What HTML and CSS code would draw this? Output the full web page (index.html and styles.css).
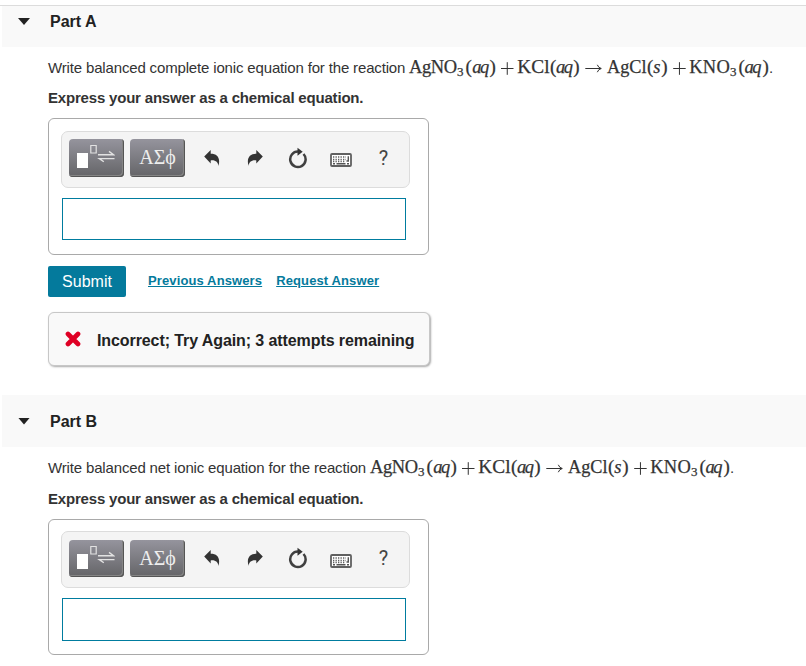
FILE: index.html
```html
<!DOCTYPE html>
<html lang="en">
<head>
<meta charset="utf-8">
<title>Ionic equations</title>
<link rel="stylesheet" href="styles.css">
</head>
<body>
<svg class="defs" aria-hidden="true">
  <symbol id="template" viewBox="0 0 40 24">
    <path d="M2 9h11v15H2z" fill="#fff"/>
    <path d="M15.8 1.5h5.4v7.5h-5.4z" fill="none" stroke="#e2e2e2" stroke-width="1.2"/>
    <path d="M23 10.7h15.5L34 7.4M39.5 14.6H24.3l4.5 3.2" fill="none" stroke="#e2e2e2" stroke-width="1.4"/>
  </symbol>
  <symbol id="undo" viewBox="0 0 16 18"><path d="M.2 7.4 6.7 1v3.8c6.7 0 9.9 4.2 7.8 12.2-.3-3.7-3-6.2-7.8-5.6v3z"/></symbol>
  <symbol id="reset" viewBox="0 0 20 22"><path d="M10 4.6A7.7 7.7 0 1 0 15.5 7" fill="none" stroke="#404040" stroke-width="2.5"/><path d="m9.5.8 5.2 4-5.2 4z"/></symbol>
  <symbol id="keyboard" viewBox="0 0 22 14">
    <rect x="1" y="1" width="20" height="12" rx="1" fill="#fff" stroke="#606060" stroke-width="1.8"/>
    <path d="M3 4h13M3 6.5h13M3 8.5h12" fill="none" stroke="#606060" stroke-width="1.3" stroke-dasharray="1.3 1.2"/>
    <path d="M3 10.8h2m1.5 0h9m1.5 0h2M18.3 3.2v4.8h-1.8" fill="none" stroke="#555" stroke-width="1.4"/>
  </symbol>
  <symbol id="cross" viewBox="0 0 16 16"><path d="m3 3 10 10M13 3 3 13" stroke="#df0024" stroke-width="4.7" stroke-linecap="round"/></symbol>
</svg>

<section class="part part-a">
  <header class="part-head"><span class="caret"></span><h2>Part A</h2></header>
  <div class="body">
    <p class="prompt"><span class="lead">Write balanced complete ionic equation for the reaction</span>
      <svg class="equation math" viewBox="0 0 364 24">
        <text x="0" y="17" textLength="48">AgNO</text><text x="48" y="20" class="sub">3</text>
        <text x="56.5" y="17" class="paren">(</text><text x="63.3" y="17" textLength="17" class="it">aq</text><text x="80.5" y="17" class="paren">)</text>
        <path d="M92 12.5h12.5M98.25 6.2v12.6"/>
        <text x="108.3" y="17" textLength="32.2" lengthAdjust="spacingAndGlyphs">KCl</text>
        <text x="141" y="17" class="paren">(</text><text x="147" y="17" textLength="17" class="it">aq</text><text x="164.3" y="17" class="paren">)</text>
        <path d="M176.3 12.5h15.5M188.3 8.8q1 3 4 3.7q-3 .7-4 3.7"/>
        <text x="198" y="17" textLength="39.5" lengthAdjust="spacingAndGlyphs">AgCl</text>
        <text x="238" y="17" class="paren">(</text><text x="244.3" y="17" class="it">s</text><text x="252.2" y="17" class="paren">)</text>
        <path d="M264.2 12.5h12.5M270.45 6.2v12.6"/>
        <text x="280.3" y="17" textLength="40.5">KNO</text><text x="321" y="20" class="sub">3</text>
        <text x="329.5" y="17" class="paren">(</text><text x="335.5" y="17" textLength="17" class="it">aq</text><text x="353.5" y="17" class="paren">)</text>
        <text x="360" y="17" class="dot">.</text>
      </svg></p>
    <p class="hint">Express your answer as a chemical equation.</p>
    <div class="editor">
      <div class="toolbar">
        <span class="tool-btn"><svg width="40" height="24"><use href="#template"/></svg></span>
        <span class="tool-btn greek">ΑΣϕ</span>
        <span class="tool"><svg width="16" height="18"><use href="#undo"/></svg></span>
        <span class="tool"><svg class="flip" width="16" height="18"><use href="#undo"/></svg></span>
        <span class="tool"><svg width="20" height="22"><use href="#reset"/></svg></span>
        <span class="tool keys"><svg width="22" height="14"><use href="#keyboard"/></svg></span>
        <span class="tool help">?</span>
      </div>
      <div class="answer"></div>
    </div>
    <div class="actions"><span class="submit">Submit</span><a class="prev">Previous Answers</a><a class="request">Request Answer</a></div>
    <div class="feedback"><svg width="16" height="16"><use href="#cross"/></svg><span>Incorrect; Try Again; 3 attempts remaining</span></div>
  </div>
</section>

<section class="part part-b">
  <header class="part-head"><span class="caret"></span><h2>Part B</h2></header>
  <div class="body">
    <p class="prompt"><span class="lead">Write balanced net ionic equation for the reaction</span>
      <svg class="equation math" viewBox="0 0 364 24">
        <text x="0" y="17" textLength="48">AgNO</text><text x="48" y="20" class="sub">3</text>
        <text x="56.5" y="17" class="paren">(</text><text x="63.3" y="17" textLength="17" class="it">aq</text><text x="80.5" y="17" class="paren">)</text>
        <path d="M92 12.5h12.5M98.25 6.2v12.6"/>
        <text x="108.3" y="17" textLength="32.2" lengthAdjust="spacingAndGlyphs">KCl</text>
        <text x="141" y="17" class="paren">(</text><text x="147" y="17" textLength="17" class="it">aq</text><text x="164.3" y="17" class="paren">)</text>
        <path d="M176.3 12.5h15.5M188.3 8.8q1 3 4 3.7q-3 .7-4 3.7"/>
        <text x="198" y="17" textLength="39.5" lengthAdjust="spacingAndGlyphs">AgCl</text>
        <text x="238" y="17" class="paren">(</text><text x="244.3" y="17" class="it">s</text><text x="252.2" y="17" class="paren">)</text>
        <path d="M264.2 12.5h12.5M270.45 6.2v12.6"/>
        <text x="280.3" y="17" textLength="40.5">KNO</text><text x="321" y="20" class="sub">3</text>
        <text x="329.5" y="17" class="paren">(</text><text x="335.5" y="17" textLength="17" class="it">aq</text><text x="353.5" y="17" class="paren">)</text>
        <text x="360" y="17" class="dot">.</text>
      </svg></p>
    <p class="hint">Express your answer as a chemical equation.</p>
    <div class="editor">
      <div class="toolbar">
        <span class="tool-btn"><svg width="40" height="24"><use href="#template"/></svg></span>
        <span class="tool-btn greek">ΑΣϕ</span>
        <span class="tool"><svg width="16" height="18"><use href="#undo"/></svg></span>
        <span class="tool"><svg class="flip" width="16" height="18"><use href="#undo"/></svg></span>
        <span class="tool"><svg width="20" height="22"><use href="#reset"/></svg></span>
        <span class="tool keys"><svg width="22" height="14"><use href="#keyboard"/></svg></span>
        <span class="tool help">?</span>
      </div>
      <div class="answer"></div>
    </div>
  </div>
</section>
</body>
</html>
```
FILE: styles.css
```css
* { box-sizing: border-box; }
body {
  margin: 0;
  padding-top: 5px;
  height: 666px;
  overflow: hidden;
  background: #fff;
  color: #333;
  font-family: "Liberation Sans", Arial, sans-serif;
}
h2, p { margin: 0; }
svg { display: block; flex: none; }
.defs { position: absolute; width: 0; height: 0; }

.part-a { height: 390px; border-top: 1px solid #dcdcdc; }
.part-head {
  display: flex;
  align-items: center;
  height: 52px;
  margin-left: 2px;
  padding-left: 16px;
  background: #f9f9f9;
}
.part-a .part-head { height: 41px; padding-bottom: 10px; }
.caret {
  width: 12px;
  height: 7px;
  margin-right: 20px;
  background: #222;
  clip-path: polygon(0 0, 100% 0, 50% 100%);
}
.part-head h2 { font-size: 16px; line-height: 20px; color: #222; }
.part-b h2 { padding-top: 1px; }
.body { padding-left: 48px; }

.prompt { display: flex; height: 24px; margin-top: 9px; font-size: 15px; line-height: 24px; white-space: nowrap; }
.lead { flex: none; width: 361px; letter-spacing: -0.155px; }
.part-b .lead { width: 322px; }
.equation { width: 364px; height: 24px; overflow: visible; }
.math { font-family: "Liberation Serif", serif; font-size: 18.5px; fill: #333; }
.math text { stroke: #333; stroke-width: 0.25; }
.math path { fill: none; stroke: #333; stroke-width: 1; }
.math .sub { font-size: 13px; }
.math .it { font-style: italic; }
.math .paren { font-size: 19px; }
.math .dot { font-family: "Liberation Sans", sans-serif; font-size: 15px; stroke: none; }

.hint { margin-top: 8px; font-size: 15px; line-height: 20px; font-weight: bold; letter-spacing: -0.19px; }
.part-b .hint { margin-top: 9px; }

.editor {
  width: 381px;
  height: 137px;
  margin-top: 10px;
  padding: 12px;
  border: 1px solid #a9a9a9;
  border-radius: 6px;
}
.part-b .editor { height: 136px; padding-top: 11px; }
.toolbar {
  display: flex;
  align-items: flex-start;
  width: 349px;
  height: 57px;
  padding: 7px;
  border: 1px solid #dcdcdc;
  border-radius: 7px;
  background: #f4f4f4;
}
.part-b .toolbar { padding-top: 8px; }
.tool-btn {
  display: flex;
  flex: none;
  align-items: center;
  justify-content: center;
  width: 55px;
  height: 38px;
  margin-right: 6px;
  border-radius: 4px;
  background: linear-gradient(#95949d, #646467);
  box-shadow: inset -1px -1px #555, inset -2px -2px #858585;
}
.part-b .tool-btn { height: 37px; }
.tool-btn svg { margin: 0 3px 4px 0; }
.greek { color: #eee; font: 20px/34px "Liberation Serif", serif; padding-bottom: 2px; }
.tool { display: flex; flex: none; align-items: center; justify-content: center; width: 43px; height: 38px; }
.greek + .tool { margin-left: -1px; }
.tool svg { fill: #333; margin-bottom: 1px; }
.part-b .tool { height: 37px; }
.flip { transform: scaleX(-1); }
.tool.keys { padding-top: 5px; }
.tool.help { font: 20px/37px Roboto, sans-serif; color: #444; }

.answer { width: 344px; height: 42px; margin: 10px 0 0 1px; border: 1px solid #007c9f; }
.part-b .answer { height: 43px; }

.actions { display: flex; align-items: center; height: 31px; margin-top: 11px; }
.submit {
  width: 78px;
  height: 31px;
  border-radius: 2px;
  background: #047a9c;
  color: #fff;
  font-size: 16px;
  line-height: 31px;
  text-align: center;
}
.actions a {
  margin: -2px 0 0 22px;
  color: #047a9c;
  font-size: 13px;
  font-weight: bold;
  letter-spacing: 0.12px;
  text-decoration: underline;
}
.actions .request { margin-left: 14px; }

.feedback {
  display: flex;
  align-items: center;
  gap: 16px;
  width: 382px;
  height: 54px;
  margin-top: 15px;
  padding-left: 16px;
  border: 1px solid #c7c7c7;
  border-radius: 6px;
  background: #f9f9f9;
  box-shadow: 1px 1px 2px #aaa;
  color: #222;
  font-size: 16px;
  font-weight: bold;
  letter-spacing: -0.09px;
  white-space: nowrap;
}
.feedback span { padding-top: 3px; }
```
